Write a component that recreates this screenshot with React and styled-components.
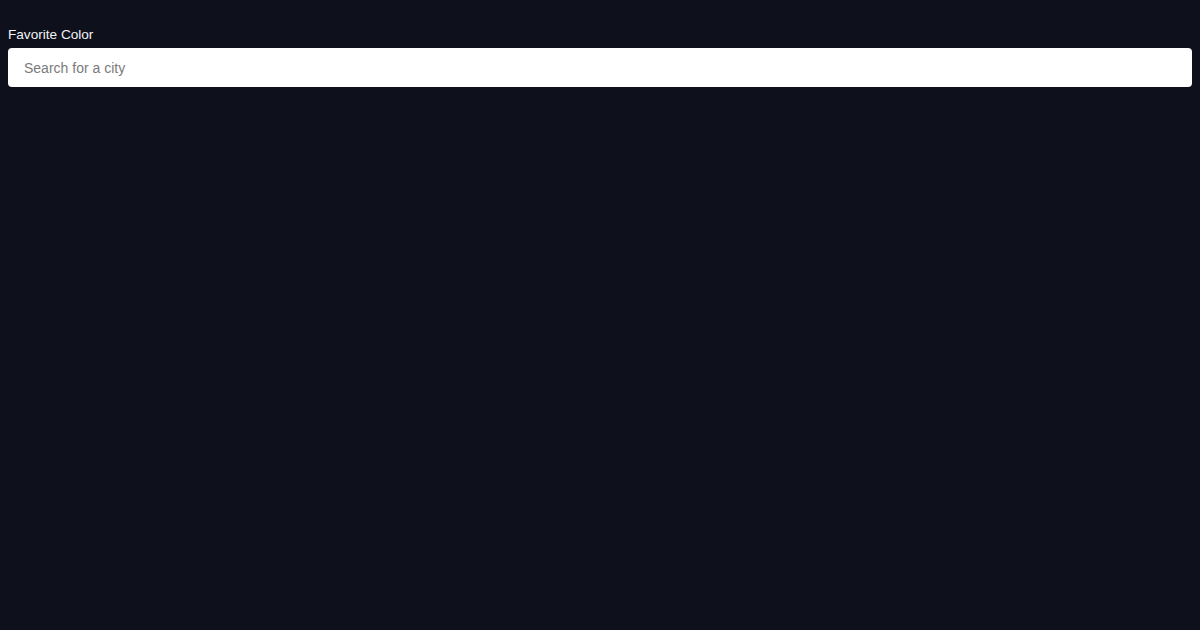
import styled, { createGlobalStyle } from "styled-components";

const GlobalStyle = createGlobalStyle`
  html, body {
    margin: 0;
    padding: 0;
    background: #0e111c;
  }
  body {
    font-family: "Liberation Sans", Arial, sans-serif;
  }
`;

const Page = styled.div`
  min-height: 100vh;
  box-sizing: border-box;
  padding: 27px 8px;
  background: #0e111c;
`;

const Field = styled.div`
  display: flex;
  flex-direction: column;
  gap: 5px;
`;

const Label = styled.label`
  color: #f2f3f5;
  font-size: 13.6px;
  line-height: 16px;
`;

const Input = styled.input`
  box-sizing: border-box;
  width: 100%;
  height: 39px;
  padding: 0 16px;
  border: none;
  border-radius: 4px;
  background: #ffffff;
  font-family: inherit;
  font-size: 14px;
  color: #222;
  outline: none;

  &::placeholder {
    color: #7a7a7a;
  }
`;

const App = () => {
  return (
    <>
      <GlobalStyle />
      <Page>
        <Field>
          <Label htmlFor="city">Favorite Color</Label>
          <Input id="city" placeholder="Search for a city" />
        </Field>
      </Page>
    </>
  );
};

export default App;
